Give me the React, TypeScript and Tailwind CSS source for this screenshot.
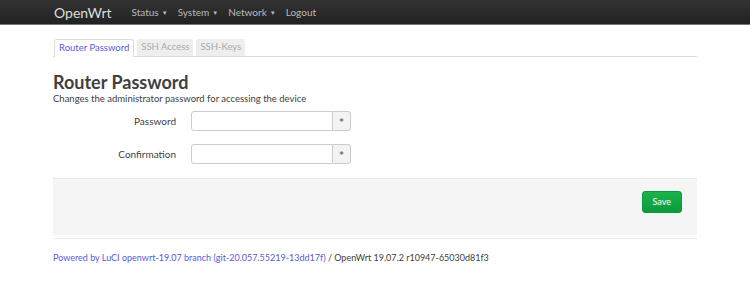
import React from "react"

const menu = ["Status", "System", "Network"]

const Field: React.FC<{ label: string }> = ({ label }) => (
  <div className="flex items-center">
    <label className="w-[123px] text-right text-[10px] text-[#404040]">{label}</label>
    <div className="ml-[15px] flex h-[20px] w-[160px]">
      <input
        type="password"
        className="h-full w-0 min-w-0 flex-1 rounded-l-[3px] border border-[#ccc] bg-white px-1 outline-none"
      />
      <span className="flex w-[18px] shrink-0 items-center justify-center rounded-r-[3px] border border-l-0 border-[#ccc] bg-[#f3f3f3] pt-[3px] text-[12px] font-bold text-[#666]">
        *
      </span>
    </div>
  </div>
)

export default function App() {
  return (
    <div className="min-h-[305px] bg-white font-['Lato',sans-serif] text-[#404040]">
      <div className="h-[25px] border-b border-[#777] bg-gradient-to-b from-[#333] to-[#222]">
        <div className="flex h-[24px] items-center pl-[54px]">
          <span className="mr-[20px] text-[14px] text-[#ddd]">OpenWrt</span>
          {menu.map((m) => (
            <span key={m} className="mr-[10px] flex items-center text-[10px] text-[#bbb]">
              {m}
              <span className="ml-[3px] text-[6px]">▼</span>
            </span>
          ))}
          <span className="text-[10px] text-[#bbb]">Logout</span>
        </div>
      </div>

      <div className="mx-[53px] pt-[14px]">
        <div className="flex h-[18px] items-end gap-[3px] border-b border-[#ddd] pl-px">
          <span className="-mb-px flex h-[18px] items-center rounded-t-[3px] border border-b-0 border-[#ddd] bg-white px-[4px] pb-px text-[9.5px] text-[#5a5ad6]">
            Router Password
          </span>
          <span className="flex h-[17px] items-center rounded-t-[3px] bg-[#eee] px-[4px] text-[9.5px] text-[#aaa]">
            SSH Access
          </span>
          <span className="flex h-[17px] items-center rounded-t-[3px] bg-[#eee] px-[4px] text-[9.5px] text-[#aaa]">
            SSH-Keys
          </span>
        </div>

        <h2 className="mt-[14px] text-[18px] font-bold leading-[22px] text-[#404040]">Router Password</h2>
        <p className="text-[9.5px] leading-[12px] text-[#404040]">
          Changes the administrator password for accessing the device
        </p>

        <div className="mt-[6px] flex flex-col gap-[13px]">
          <Field label="Password" />
          <Field label="Confirmation" />
        </div>

        <div className="mt-[14px] flex h-[57px] items-start justify-end border-t border-[#e8e8e8] bg-[#f5f5f5] pr-[15px] pt-[12px]">
          <button className="h-[22px] rounded-[3px] border border-[#0a9a3a] bg-gradient-to-b from-[#1ab34b] to-[#0c9a3e] px-[10px] text-[9px] text-white">
            Save
          </button>
        </div>

        <div className="mt-[3px] border-t border-[#eee] pt-[12px] text-[9px]">
          <span className="text-[#5a5ad6]">Powered by LuCI openwrt-19.07 branch (git-20.057.55219-13dd17f)</span>
          <span> / OpenWrt 19.07.2 r10947-65030d81f3</span>
        </div>
      </div>
    </div>
  )
}
